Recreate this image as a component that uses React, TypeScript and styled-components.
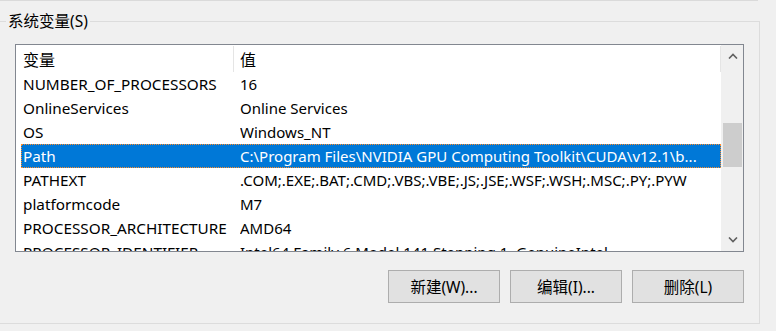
import React from "react";
import styled, { createGlobalStyle } from "styled-components";

const Global = createGlobalStyle`
  html, body { margin: 0; padding: 0; background: #f0f0f0; overflow: hidden; }
  * { box-sizing: border-box; }
`;

const FONT = `"Noto Sans", "Noto Sans CJK SC", sans-serif`;

const Page = styled.div`
  width: 776px;
  height: 331px;
  background: #f0f0f0;
  font-family: ${FONT};
  font-size: 15px;
  color: #000;
  overflow: hidden;
`;

const TopRule = styled.div`
  width: 760px;
  height: 1px;
  background: #dadada;
  margin-left: -2px;
`;

const GroupBox = styled.div`
  position: relative;
  margin-top: 20px;
  margin-left: -2px;
  width: 762px;
  height: 303px;
  border: 1px solid #dcdcdc;
  padding: 22px 0 0 16px;
`;

const Legend = styled.div`
  position: absolute;
  top: -12px;
  left: 7px;
  padding: 0 2px;
  background: #f0f0f0;
  line-height: 22px;
  font-size: 15.5px;
`;

const List = styled.div`
  width: 729px;
  height: 208px;
  border: 1px solid #828790;
  background: #fff;
  display: flex;
`;

const Main = styled.div`
  width: 706px;
  display: flex;
  flex-direction: column;
  overflow: hidden;
`;

const Header = styled.div`
  height: 27px;
  display: flex;
  flex: none;
  font-size: 16px;
`;

const HeadCell = styled.div<{ $w: number; $pad: number }>`
  width: ${(p) => p.$w}px;
  padding-left: ${(p) => p.$pad}px;
  display: flex;
  align-items: center;
  position: relative;
  &::after {
    content: "";
    position: absolute;
    right: 0;
    top: 1px;
    bottom: 0;
    width: 1px;
    background: #e5e5e5;
  }
`;

const Rows = styled.div`
  padding-left: 5px;
  display: flex;
  flex-direction: column;
`;

const Row = styled.div<{ $sel?: boolean }>`
  height: 24px;
  width: 700px;
  display: flex;
  align-items: center;
  flex: none;
  white-space: nowrap;
  background: ${(p) => (p.$sel ? "#0078d7" : "transparent")};
  color: ${(p) => (p.$sel ? "#fff" : "#000")};
  border: 1px dotted ${(p) => (p.$sel ? "#ff8c28" : "transparent")};
`;

const NameCell = styled.div`
  width: 218px;
  padding-left: 1px;
  overflow: hidden;
  font-size: 15.3px;
`;

const ValueCell = styled.div`
  flex: 1;
  overflow: hidden;
`;

const Scrollbar = styled.div`
  width: 22px;
  border-left: 1px solid #f0f0f0;
  background: #f0f0f0;
  display: flex;
  flex-direction: column;
  align-items: center;
`;

const ArrowBtn = styled.div`
  height: 22px;
  width: 100%;
  display: flex;
  align-items: center;
  justify-content: center;
  flex: none;
`;

const Track = styled.div<{ $offset: number }>`
  flex: 1;
  width: 100%;
  padding-top: ${(p) => p.$offset}px;
  display: flex;
  justify-content: center;
`;

const Thumb = styled.div`
  width: 19px;
  height: 44px;
  background: #cdcdcd;
`;

const Buttons = styled.div`
  width: 729px;
  margin-top: 18px;
  display: flex;
  justify-content: flex-end;
  gap: 10px;
`;

const Button = styled.button`
  width: 112px;
  height: 33px;
  background: #e1e1e1;
  border: 1px solid #adadad;
  font-family: ${FONT};
  font-size: 15.5px;
  color: #000;
  padding: 0;
  display: flex;
  align-items: center;
  justify-content: center;
`;

const Chevron = ({ up }: { up?: boolean }) => (
  <svg width="10" height="6" viewBox="0 0 10 6">
    <path
      d={up ? "M1 5.5 L5 1.5 L9 5.5" : "M1 0.5 L5 4.5 L9 0.5"}
      fill="none"
      stroke="#606060"
      strokeWidth="1.6"
    />
  </svg>
);

const rows: [string, string][] = [
  ["NUMBER_OF_PROCESSORS", "16"],
  ["OnlineServices", "Online Services"],
  ["OS", "Windows_NT"],
  ["Path", "C:\\Program Files\\NVIDIA GPU Computing Toolkit\\CUDA\\v12.1\\b..."],
  ["PATHEXT", ".COM;.EXE;.BAT;.CMD;.VBS;.VBE;.JS;.JSE;.WSF;.WSH;.MSC;.PY;.PYW"],
  ["platformcode", "M7"],
  ["PROCESSOR_ARCHITECTURE", "AMD64"],
  ["PROCESSOR_IDENTIFIER", "Intel64 Family 6 Model 141 Stepping 1, GenuineIntel"],
];

export default function App() {
  return (
    <Page>
      <Global />
      <TopRule />
      <GroupBox>
        <Legend>系统变量(S)</Legend>
        <List>
          <Main>
            <Header>
              <HeadCell $w={218} $pad={7}>变量</HeadCell>
              <HeadCell $w={487} $pad={6}>值</HeadCell>
            </Header>
            <Rows>
              {rows.map(([n, v]) => (
                <Row key={n} $sel={n === "Path"}>
                  <NameCell>{n}</NameCell>
                  <ValueCell>{v}</ValueCell>
                </Row>
              ))}
            </Rows>
          </Main>
          <Scrollbar>
            <ArrowBtn>
              <Chevron up />
            </ArrowBtn>
            <Track $offset={56}>
              <Thumb />
            </Track>
            <ArrowBtn>
              <Chevron />
            </ArrowBtn>
          </Scrollbar>
        </List>
        <Buttons>
          <Button>新建(W)...</Button>
          <Button>编辑(I)...</Button>
          <Button>删除(L)</Button>
        </Buttons>
      </GroupBox>
    </Page>
  );
}
